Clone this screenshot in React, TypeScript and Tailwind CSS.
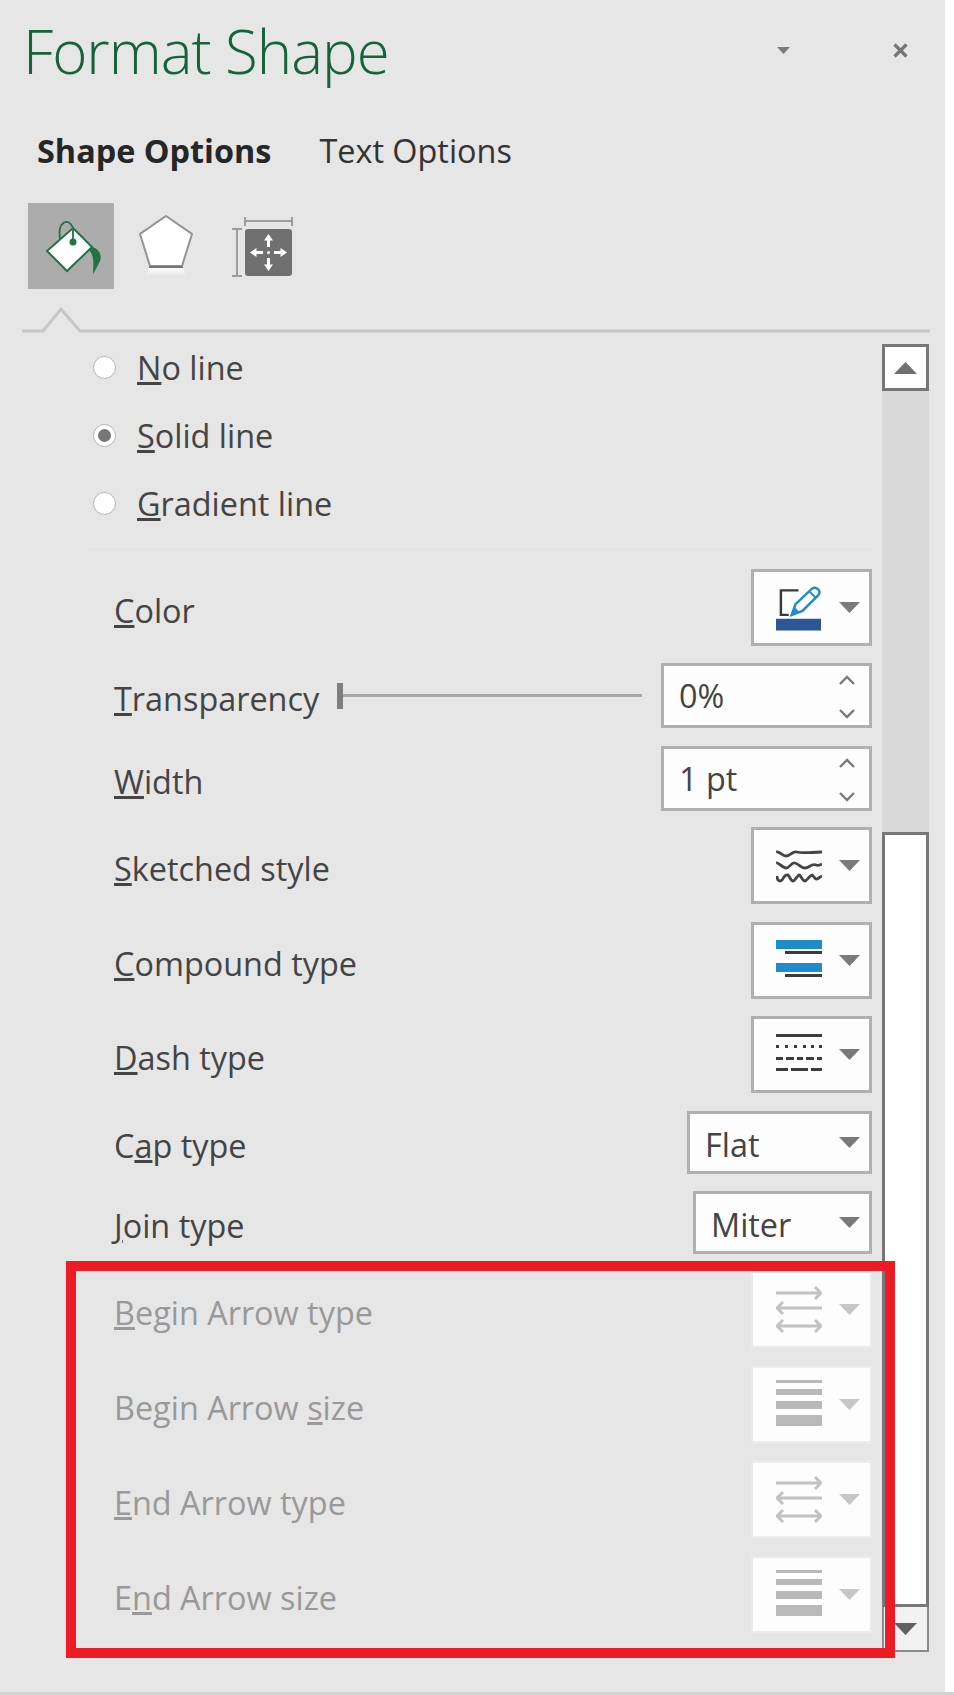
import React from "react";

const Caret = ({ color = "#7a7a7a" }: { color?: string }) => (
    <svg width="21" height="11" viewBox="0 0 21 11" className="shrink-0">
        <polygon points="0,0 21,0 10.5,11" fill={color} />
    </svg>
);

const Chevron = ({ up }: { up?: boolean }) => (
    <svg width="16" height="10" viewBox="0 0 16 10">
        <path
            d={up ? "M1,9 L8,2 L15,9" : "M1,1 L8,8 L15,1"}
            fill="none"
            stroke="#7a7a7a"
            strokeWidth="2.4"
        />
    </svg>
);

const BucketIcon = () => (
    <svg width="86" height="86" viewBox="0 0 86 86">
        <polygon points="45,25 64,44 39,68 19,48" fill="#fff" stroke="#217346" strokeWidth="2" />
        <path d="M32,36 C29,18 41,14 45,25 L45,39" fill="none" stroke="#217346" strokeWidth="1.8" />
        <circle cx="45" cy="39" r="3.5" fill="#217346" />
        <path d="M64,44 C72,46 75,54 71,60 C69,64 67,68 65,71 C65,62 67,54 61,47 Z" fill="#217346" />
    </svg>
);

const PentagonIcon = () => (
    <svg width="56" height="62" viewBox="0 0 56 62">
        <defs>
            <linearGradient id="shade" x1="0" y1="0" x2="0" y2="1">
                <stop offset="0" stopColor="#ffffff" />
                <stop offset="1" stopColor="#e6e6e6" />
            </linearGradient>
        </defs>
        <polygon points="11,52 45,52 48,61 8,61" fill="url(#shade)" />
        <polygon points="28,1 54,19 44,51 12,51 2,19" fill="#fff" stroke="#939393" strokeWidth="2" />
        <path d="M11,52 H45" stroke="#757575" strokeWidth="2" />
    </svg>
);

const SizeIcon = () => (
    <svg width="62" height="61" viewBox="0 0 62 61">
        <path
            d="M13,5 H60 M13,1 V10 M60,1 V10 M5,13 V60 M0,13 H10 M0,60 H10"
            fill="none"
            stroke="#9c9c9c"
            strokeWidth="2"
        />
        <rect x="13" y="13" width="47" height="47" rx="3" fill="#707070" />
        <path d="M36.5,23 V31 M36.5,42 V50 M23,36.5 H31 M42,36.5 H50" stroke="#fff" strokeWidth="3" />
        <polygon points="36.5,18 41,24.5 32,24.5" fill="#fff" />
        <polygon points="36.5,55 41,48.5 32,48.5" fill="#fff" />
        <polygon points="18,36.5 24.5,32 24.5,41" fill="#fff" />
        <polygon points="55,36.5 48.5,32 48.5,41" fill="#fff" />
        <circle cx="36.5" cy="36.5" r="1.5" fill="#fff" />
    </svg>
);

const ColorIcon = () => (
    <svg width="47" height="46" viewBox="0 -2 47 46">
        <path d="M23,3 H5 V28 H13" fill="none" stroke="#3a3a3a" strokeWidth="2.5" />
        <path
            d="M16,28 L20,17 L37,1 Q40,-1 43,2 Q46,5 43,8 L27,24 Z"
            fill="#fff"
            stroke="#1e8bcd"
            strokeWidth="2.5"
        />
        <polygon points="16,28 19,20 24,25" fill="#1e8bcd" />
        <path d="M34,4 L40,10" stroke="#1e8bcd" strokeWidth="2" />
        <rect x="0" y="32" width="46" height="12" fill="#2b5797" />
    </svg>
);

const SketchIcon = () => (
    <svg width="46" height="34" viewBox="0 0 46 34">
        <g fill="none" stroke="#444" strokeWidth="2.8">
            <path d="M0,3 C4,2 6,7 10,7 C14,7 16,2 21,3 C24,4 30,4 46,3" />
            <path d="M0,14 C3,13 6,19 10,19 C14,19 15,13 19,14 C23,15 25,19 29,19 C33,19 36,14 40,16 C42,17 44,16 46,15" />
            <path d="M1,27 C1,32 4,33 6,31 C8,28 9,25 12,26 C14,28 15,32 17,32 C19,32 21,27 23,26 C25,26 26,32 29,32 C31,32 33,27 36,26 C38,27 39,31 41,30 C43,29 44,28 46,27" />
        </g>
    </svg>
);

const CompoundIcon = () => (
    <div className="mb-[4px] flex w-[46px] flex-col items-end">
        <div className="h-[9px] w-[46px] bg-[#1e8bcd]" />
        <div className="mt-[2px] h-[3px] w-[37px] bg-[#3c3c3c]" />
        <div className="mt-[9px] h-[9px] w-[46px] bg-[#1e8bcd]" />
        <div className="mt-[2px] h-[3px] w-[37px] bg-[#3c3c3c]" />
    </div>
);

const DashIcon = () => (
    <svg width="46" height="38" viewBox="0 0 46 38" className="mb-[4px]">
        <g fill="#3c3c3c">
            <rect x="0" y="0" width="46" height="3" />
            {[0, 9, 18, 27, 35, 43].map((x) => (
                <rect key={x} x={x} y="11" width="3" height="3" />
            ))}
            {[
                [0, 7],
                [10, 8],
                [21, 6],
                [30, 8],
                [41, 5],
            ].map(([x, w]) => (
                <rect key={x} x={x} y="23" width={w} height="3" />
            ))}
            {[
                [0, 12],
                [15, 17],
                [35, 11],
            ].map(([x, w]) => (
                <rect key={x} x={x} y="34" width={w} height="3" />
            ))}
        </g>
    </svg>
);

const ArrowsIcon = () => (
    <svg width="46" height="48" viewBox="0 0 46 48" className="mb-[2px]">
        <g fill="none" stroke="#c2c2c2" strokeWidth="3">
            <path d="M0,8 H44 M39,2 L45,8 L39,14" />
            <path d="M2,23 H46 M7,17 L1,23 L7,29" />
            <path d="M2,41 H44 M7,35 L1,41 L7,47 M39,35 L45,41 L39,47" />
        </g>
    </svg>
);

const WeightsIcon = () => (
    <div className="mb-[4px] flex w-[46px] flex-col">
        <div className="h-[3px] bg-[#b9b9b9]" />
        <div className="mt-[6px] h-[6px] bg-[#b9b9b9]" />
        <div className="mt-[6px] h-[8px] bg-[#b9b9b9]" />
        <div className="mt-[6px] h-[11px] bg-[#b9b9b9]" />
    </div>
);

const IconBox = ({ children, disabled }: { children: React.ReactNode; disabled?: boolean }) => (
    <div
        className={
            disabled
                ? "flex h-[77px] w-[121px] items-center border-[2px] border-[#ebebeb] bg-[#fdfdfd] pl-[23px]"
                : "flex h-[77px] w-[121px] items-center border-[3px] border-[#b0b0b0] bg-[#fdfdfd] pl-[22px]"
        }
    >
        <div className="flex w-[46px] shrink-0 justify-center">{children}</div>
        <div className="ml-[17px]">
            <Caret color={disabled ? "#c6c6c6" : "#7a7a7a"} />
        </div>
    </div>
);

const Spinner = ({ value }: { value: string }) => (
    <div className="flex h-[65px] w-[211px] items-center justify-between border-[3px] border-[#b0b0b0] bg-[#fdfdfd] pl-[15px] pr-[14px]">
        <span>{value}</span>
        <div className="flex h-full flex-col justify-between pb-[6px] pt-[9px]">
            <Chevron up />
            <Chevron />
        </div>
    </div>
);

const Select = ({ value, width }: { value: string; width: string }) => (
    <div
        className={`flex h-[63px] ${width} items-center justify-between border-[3px] border-[#b0b0b0] bg-[#fdfdfd] pl-[15px] pr-[9px]`}
    >
        <span className="pt-[4px]">{value}</span>
        <Caret />
    </div>
);

const Row = ({
    label,
    className,
    children,
    disabled,
}: {
    label: React.ReactNode;
    className: string;
    children: React.ReactNode;
    disabled?: boolean;
}) => (
    <div
        className={`flex items-center justify-between pl-[29px] ${disabled ? "text-[#999999]" : ""} ${className}`}
    >
        <span className="pt-[6px]">{label}</span>
        {children}
    </div>
);

const Radio = ({ label, checked }: { label: React.ReactNode; checked?: boolean }) => (
    <div className="flex h-[68px] items-center pl-[8px]">
        <div className="flex h-[23px] w-[23px] items-center justify-center rounded-full border-[1.5px] border-[#b5b5b5] bg-white">
            {checked && <div className="h-[13px] w-[13px] rounded-full bg-[#777777]" />}
        </div>
        <span className="ml-[21px]">{label}</span>
    </div>
);

const App = () => {
    return (
        <div className="relative h-[1695px] w-[954px] overflow-hidden bg-white font-['Open_Sans',sans-serif] text-[32.4px] text-[#444444]">
            <div className="h-[1692px] w-[945px] bg-[#e6e6e6]">
                {/* header */}
                <div className="flex h-[100px] items-center pl-[23px]">
                    <h1 className="pt-[2px] text-[60px] font-light leading-none tracking-[-1px] text-[#14633a]">Format Shape</h1>
                    <div className="ml-auto flex items-center pr-[37px]">
                        <svg width="13" height="7" viewBox="0 0 13 7">
                            <polygon points="0,0 13,0 6.5,7" fill="#7a7a7a" />
                        </svg>
                        <svg width="15" height="15" viewBox="0 0 15 15" className="ml-[103px]">
                            <path d="M1.5,1.5 L13.5,13.5 M13.5,1.5 L1.5,13.5" stroke="#757575" strokeWidth="3.2" />
                        </svg>
                    </div>
                </div>

                {/* tabs */}
                <div className="mt-[28px] flex h-[44px] items-center pl-[37px]">
                    <span className="font-bold text-[#262626]">Shape Options</span>
                    <span className="ml-[48px] text-[#333333]">Text Options</span>
                </div>

                {/* category icons */}
                <div className="mt-[31px] flex items-start pl-[28px]">
                    <div className="h-[86px] w-[86px] bg-[#acacac]">
                        <BucketIcon />
                    </div>
                    <div className="ml-[24px] mt-[12px]">
                        <PentagonIcon />
                    </div>
                    <div className="ml-[38px] mt-[13px]">
                        <SizeIcon />
                    </div>
                </div>

                <svg width="945" height="29" viewBox="0 0 945 29" className="mt-[15px] block">
                    <path d="M22,27 H43 L61,5 L80,27 H930" fill="none" stroke="#c6c6c6" strokeWidth="3" />
                </svg>

                {/* body */}
                <div className="flex pr-[16px]">
                    <div className="ml-[85px] w-[787px]">
                        <Radio label={<><u>N</u>o line</>} />
                        <Radio checked label={<><u>S</u>olid line</>} />
                        <Radio label={<><u>G</u>radient line</>} />
                        <div className="mt-[9px] h-px bg-[#ebebeb]" />

                        <Row className="mt-[22px]" label={<><u>C</u>olor</>}>
                            <IconBox><ColorIcon /></IconBox>
                        </Row>
                        <div className="mt-[17px] flex items-center pl-[29px]">
                            <span className="w-[223px] pt-[6px]"><u>T</u>ransparency</span>
                            <div className="flex w-[305px] items-center">
                                <div className="h-[26px] w-[6px] bg-[#7e7e7e]" />
                                <div className="h-[3px] w-[299px] bg-[#a8a8a8]" />
                            </div>
                            <div className="ml-[19px]">
                                <Spinner value="0%" />
                            </div>
                        </div>
                        <Row className="mt-[18px]" label={<><u>W</u>idth</>}>
                            <Spinner value="1 pt" />
                        </Row>
                        <Row className="mt-[16px]" label={<><u>S</u>ketched style</>}>
                            <IconBox><SketchIcon /></IconBox>
                        </Row>
                        <Row className="mt-[18px]" label={<><u>C</u>ompound type</>}>
                            <IconBox><CompoundIcon /></IconBox>
                        </Row>
                        <Row className="mt-[17px]" label={<><u>D</u>ash type</>}>
                            <IconBox><DashIcon /></IconBox>
                        </Row>
                        <Row className="mt-[18px]" label={<>C<u>a</u>p type</>}>
                            <Select value="Flat" width="w-[185px]" />
                        </Row>
                        <Row className="mt-[17px]" label={<><u>J</u>oin type</>}>
                            <Select value="Miter" width="w-[179px]" />
                        </Row>

                        <Row disabled className="mt-[17px]" label={<><u>B</u>egin Arrow type</>}>
                            <IconBox disabled><ArrowsIcon /></IconBox>
                        </Row>
                        <Row disabled className="mt-[18px]" label={<>Begin Arrow <u>s</u>ize</>}>
                            <IconBox disabled><WeightsIcon /></IconBox>
                        </Row>
                        <Row disabled className="mt-[18px]" label={<><u>E</u>nd Arrow type</>}>
                            <IconBox disabled><ArrowsIcon /></IconBox>
                        </Row>
                        <Row disabled className="mt-[18px]" label={<>E<u>n</u>d Arrow size</>}>
                            <IconBox disabled><WeightsIcon /></IconBox>
                        </Row>
                    </div>

                    {/* scrollbar */}
                    <div className="ml-[10px] mt-[11px] flex h-[1308px] w-[47px] flex-col">
                        <div className="flex h-[47px] items-center justify-center border-[3px] border-[#777777] bg-white">
                            <svg width="23" height="12" viewBox="0 0 23 12">
                                <polygon points="11.5,0 23,12 0,12" fill="#707070" />
                            </svg>
                        </div>
                        <div className="h-[441px] bg-[#d9d9d9]" />
                        <div className="flex-1 border-[3px] border-[#777777] bg-white" />
                        <div className="flex h-[45px] items-center justify-center border-[2px] border-t-0 border-[#8a8a8a] bg-[#f2f2f2]">
                            <svg width="23" height="12" viewBox="0 0 23 12">
                                <polygon points="0,0 23,0 11.5,12" fill="#606060" />
                            </svg>
                        </div>
                    </div>
                </div>
            </div>
            <div className="h-[3px] bg-[#d2d2d2]" />

            {/* red highlight drawn over the panel */}
            <div className="absolute left-[66px] top-[1261px] h-[397px] w-[829px] border-[10px] border-[#ed1c24]" />
        </div>
    );
};

export default App;
